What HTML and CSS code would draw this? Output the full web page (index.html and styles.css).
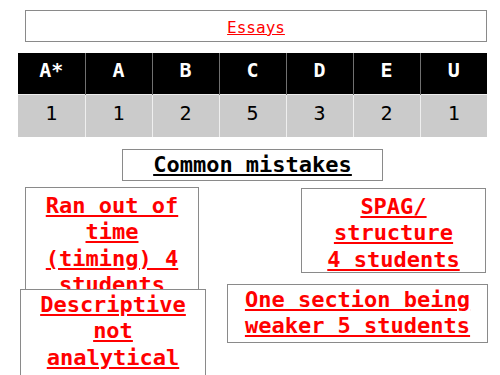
FILE: index.html
```html
<!DOCTYPE html>
<html>
<head>
    <meta charset="utf-8">
    <title>Essays</title>
    <link rel="stylesheet" href="styles.css">
</head>
<body>
    <div class="slide">
        <div class="title-box"><span>Essays</span></div>

        <table class="grades">
            <thead>
                <tr>
                    <th>A*</th>
                    <th>A</th>
                    <th>B</th>
                    <th>C</th>
                    <th>D</th>
                    <th>E</th>
                    <th>U</th>
                </tr>
            </thead>
            <tbody>
                <tr>
                    <td>1</td>
                    <td>1</td>
                    <td>2</td>
                    <td>5</td>
                    <td>3</td>
                    <td>2</td>
                    <td>1</td>
                </tr>
            </tbody>
        </table>

        <div class="heading-box"><span>Common mistakes</span></div>

        <!-- sticky notes, dropped onto the slide by hand -->
        <div class="note note-timing"><span>Ran out of time (timing) 4 students</span></div>
        <div class="note note-spag"><span>SPAG/<br>structure<br>4 students</span></div>
        <div class="note note-section"><span>One section being weaker 5 students</span></div>
        <div class="note note-descriptive"><span>Descriptive not analytical</span></div>
    </div>
</body>
</html>
```

FILE: styles.css
```css
* {
    box-sizing: border-box;
    margin: 0;
    padding: 0;
}
body {
    font-family: "DejaVu Sans Mono", "Liberation Mono", monospace;
    background: white;
    color: #000;
}
.slide {
    position: relative;
    width: 500px;
    height: 375px;
    overflow: hidden;
}
.title-box {
    width: 462px;
    height: 32px;
    margin: 10px 0 0 25px;
    padding-top: 7px;
    border: 1px solid #8a8a8a;
    text-align: center;
    font-size: 16px;
    color: #ff0000;
}
.title-box span {
    text-decoration: underline;
}
.grades {
    width: 469px;
    margin: 11px 0 0 18px;
    border-collapse: collapse;
    table-layout: fixed;
    font-size: 20px;
    line-height: 23px;
    text-align: center;
}
.grades th {
    height: 41px;
    padding: 6px 0 12px;
    vertical-align: top;
    background: #000;
    color: #fff;
    font-weight: bold;
}
.grades th + th {
    border-left: 1px solid #707070;
}
.grades td {
    height: 42px;
    padding: 7px 0 12px;
    vertical-align: top;
    background: #cbcbcb;
    border-top: 1px solid #efefef;
    font-weight: normal;
}
.grades td + td {
    border-left: 1px solid #efefef;
}
.heading-box {
    width: 261px;
    height: 32px;
    margin: 12px 0 0 122px;
    padding-top: 2px;
    border: 1px solid #8a8a8a;
    text-align: center;
    font-size: 22px;
    font-weight: bold;
}
.heading-box span {
    text-decoration: underline;
}
.note {
    position: absolute;
    background: white;
    border: 1px solid #8a8a8a;
    text-align: center;
    font-size: 22px;
    font-weight: bold;
    line-height: 1.2;
    color: #ff0000;
}
.note span {
    text-decoration: underline;
}
.note-timing {
    left: 25px;
    top: 187px;
    width: 174px;
    height: 112px;
    padding: 5px 8px 0;
}
.note-spag {
    left: 301px;
    top: 188px;
    width: 185px;
    height: 85px;
    padding: 5px 4px 0;
}
.note-section {
    left: 227px;
    top: 284px;
    width: 261px;
    height: 59px;
    padding: 2px 2px 0;
}
.note-descriptive {
    left: 20px;
    top: 289px;
    width: 186px;
    height: 100px;
    padding: 2px 2px 0;
}
```
